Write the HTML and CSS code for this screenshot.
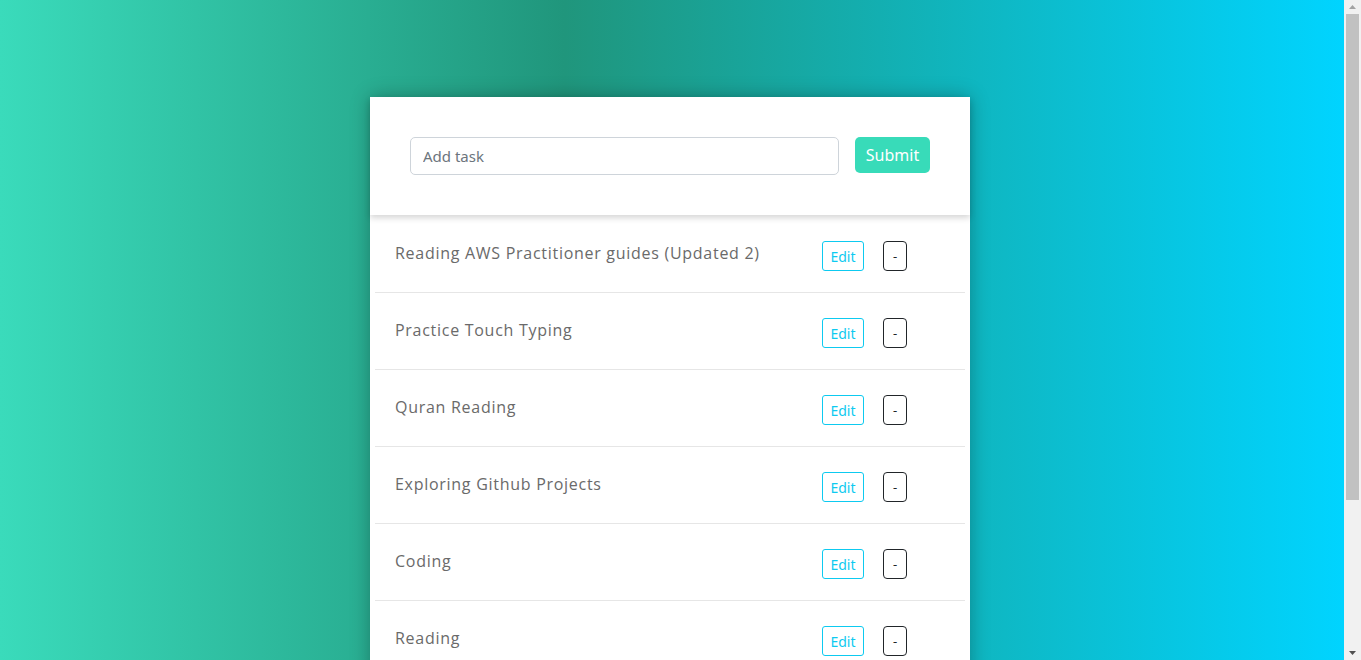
FILE: index.html
```html
<!DOCTYPE html>
<html lang="en">
<head>
<meta charset="utf-8">
<title>Todo</title>
<link rel="stylesheet" href="styles.css">
</head>
<body>
<main class="viewport">
  <div class="page">
    <div class="card">
      <form class="add-form">
        <input class="task-input" type="text" placeholder="Add task">
        <button class="submit-btn" type="button">Submit</button>
      </form>
      <ul class="task-list">
        <li class="task"><span class="task-name">Reading AWS Practitioner guides (Updated 2)</span><button class="edit-btn">Edit</button><button class="del-btn">-</button></li>
        <li class="task"><span class="task-name">Practice Touch Typing</span><button class="edit-btn">Edit</button><button class="del-btn">-</button></li>
        <li class="task"><span class="task-name">Quran Reading</span><button class="edit-btn">Edit</button><button class="del-btn">-</button></li>
        <li class="task"><span class="task-name">Exploring Github Projects</span><button class="edit-btn">Edit</button><button class="del-btn">-</button></li>
        <li class="task"><span class="task-name">Coding</span><button class="edit-btn">Edit</button><button class="del-btn">-</button></li>
        <li class="task"><span class="task-name">Reading</span><button class="edit-btn">Edit</button><button class="del-btn">-</button></li>
        <li class="task"><span class="task-name">Workout</span><button class="edit-btn">Edit</button><button class="del-btn">-</button></li>
        <li class="task"><span class="task-name">Learning React</span><button class="edit-btn">Edit</button><button class="del-btn">-</button></li>
      </ul>
    </div>
  </div>
</main>
<div class="scrollbar" aria-hidden="true">
  <div class="sb-btn"><svg width="9" height="6" viewBox="0 0 9 6"><path d="M4.5 1 L8 5 L1 5 Z" fill="#a3a3a3"/></svg></div>
  <div class="sb-thumb"></div>
  <div class="sb-rest"></div>
  <div class="sb-btn"><svg width="9" height="6" viewBox="0 0 9 6"><path d="M1 1 L8 1 L4.5 5 Z" fill="#505050"/></svg></div>
</div>
</body>
</html>
```

FILE: styles.css
```css
html, body {
  margin: 0;
  padding: 0;
}

body {
  display: flex;
  height: 100vh;
  overflow: hidden;
  font-family: "Open Sans", "Noto Sans", sans-serif;
}

.viewport {
  flex: 1;
  min-width: 0;
  overflow: hidden;
  background: linear-gradient(to right, #3adbbb 0%, #20967c 42%, #00d4ff 100%);
}

.page {
  padding: 97px 4px 31px 0;
}

.card {
  width: 600px;
  margin: 0 auto;
  background: #fff;
  box-shadow: 0 0 18px rgba(0, 0, 0, 0.28);
}

.add-form {
  position: relative;
  z-index: 1;
  display: flex;
  align-items: flex-start;
  gap: 16px;
  padding: 40px;
  margin: 0;
  background: #fff;
  box-shadow: 0 3px 6px rgba(0, 0, 0, 0.16);
}

.task-input {
  flex: 1;
  height: 38px;
  box-sizing: border-box;
  border: 1px solid #ced4da;
  border-radius: 5px;
  padding: 0 12px;
  font-family: "Noto Sans", "Open Sans", sans-serif;
  font-size: 15px;
  color: #495057;
}

.task-input::placeholder {
  color: #6c757d;
}

.submit-btn {
  width: 75px;
  height: 36px;
  border: none;
  border-radius: 5px;
  background: #38dbb9;
  color: #fff;
  font-family: "Noto Sans", "Open Sans", sans-serif;
  font-size: 16px;
  padding: 0;
}

.task-list {
  list-style: none;
  margin: 0;
  padding: 1px 5px 0;
}

.task {
  display: flex;
  align-items: flex-start;
  padding: 25px 58px 21px 20px;
  border-bottom: 1px solid #e6e6e6;
}

.task-name {
  flex: 1;
  font-size: 16px;
  line-height: 24px;
  letter-spacing: 0.72px;
  color: #6a6a6a;
}

.edit-btn {
  width: 42px;
  height: 30px;
  box-sizing: border-box;
  border: 1px solid #0dcaf0;
  border-radius: 3px;
  background: #fff;
  color: #0dcaf0;
  font-family: "Noto Sans", "Open Sans", sans-serif;
  font-size: 14px;
  padding: 0;
}

.del-btn {
  width: 24px;
  height: 30px;
  box-sizing: border-box;
  margin-left: 19px;
  border: 1px solid #212529;
  border-radius: 4px;
  background: #fff;
  color: #212529;
  font-family: "Noto Sans", "Open Sans", sans-serif;
  font-size: 13px;
  padding: 0;
}

.scrollbar {
  width: 17px;
  flex: none;
  display: flex;
  flex-direction: column;
  background: #f1f1f1;
}

.sb-btn {
  height: 14px;
  display: flex;
  align-items: center;
  justify-content: center;
}

.sb-thumb {
  height: 486px;
  margin: 0 2px;
  background: #c1c1c1;
}

.sb-rest {
  flex: 1;
}
```
